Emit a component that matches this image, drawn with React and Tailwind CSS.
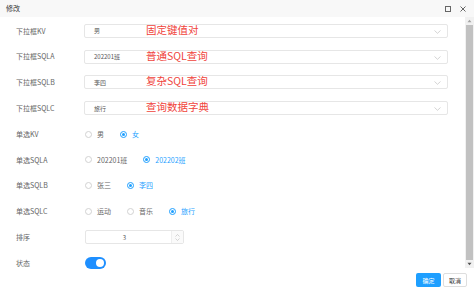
import React from "react";

const FONT = { fontFamily: '"Noto Sans CJK SC", "Noto Sans", sans-serif' };

function Chevron() {
  return (
    <svg width="7" height="4" viewBox="0 0 7 4" className="absolute right-[6px] top-[5px]">
      <path d="M0.5 0.5 L3.5 3.3 L6.5 0.5" fill="none" stroke="#c2c2c2" strokeWidth="0.7" />
    </svg>
  );
}

function Row({ label, children }) {
  return (
    <div className="flex h-[25.8px] items-center">
      <div className="w-[84px] shrink-0 pl-[16px] text-[7px] text-[#666]">{label}</div>
      {children}
    </div>
  );
}

function Select({ value, note }) {
  return (
    <div className="relative flex h-[14px] w-[364px] items-center rounded-[2px] border border-[#e6e6e6] bg-white pl-[9px] text-[6px] text-[#555]">
      <span>{value}</span>
      <span className="absolute left-[61px] top-[-2px] whitespace-nowrap text-[10.5px] leading-[14px] text-[#f0433b]">
        {note}
      </span>
      <Chevron />
    </div>
  );
}

function Radio({ label, checked }) {
  return (
    <div className="mr-[16px] flex items-center">
      {checked ? (
        <span className="flex h-[7px] w-[7px] items-center justify-center rounded-full border border-[#1e9fff] bg-white">
          <span className="h-[3px] w-[3px] rounded-full bg-[#1e9fff]" />
        </span>
      ) : (
        <span className="h-[7px] w-[7px] rounded-full border border-[#d2d2d2] bg-white" />
      )}
      <span className={`ml-[5px] text-[7px] ${checked ? "text-[#1e9fff]" : "text-[#666]"}`}>{label}</span>
    </div>
  );
}

export default function App() {
  return (
    <div className="flex h-[296px] w-[474px] flex-col overflow-hidden bg-white" style={FONT}>
      <div className="flex h-[17px] shrink-0 items-center justify-between bg-[#f8f8f8] pl-[6px] pr-[8px]">
        <span className="text-[7px] text-[#333]">修改</span>
        <div className="flex items-center gap-[9px]">
          <span className="h-[6px] w-[6px] border border-[#666]" />
          <svg width="6" height="6" viewBox="0 0 6 6">
            <path d="M0.5 0.5 L5.5 5.5 M5.5 0.5 L0.5 5.5" stroke="#555" strokeWidth="0.9" />
          </svg>
        </div>
      </div>
      <div className="flex h-[251px] shrink-0">
        <div className="flex-1 pt-[1px]">
          <Row label="下拉框KV"><Select value="男" note="固定键值对" /></Row>
          <Row label="下拉框SQLA"><Select value="202201班" note="普通SQL查询" /></Row>
          <Row label="下拉框SQLB"><Select value="李四" note="复杂SQL查询" /></Row>
          <Row label="下拉框SQLC"><Select value="旅行" note="查询数据字典" /></Row>
          <Row label="单选KV">
            <div className="flex pl-[1px]"><Radio label="男" /><Radio label="女" checked /></div>
          </Row>
          <Row label="单选SQLA">
            <div className="flex pl-[1px]"><Radio label="202201班" /><Radio label="202202班" checked /></div>
          </Row>
          <Row label="单选SQLB">
            <div className="flex pl-[1px]"><Radio label="张三" /><Radio label="李四" checked /></div>
          </Row>
          <Row label="单选SQLC">
            <div className="flex pl-[1px]"><Radio label="运动" /><Radio label="音乐" /><Radio label="旅行" checked /></div>
          </Row>
          <Row label="排序">
            <div className="ml-[1px] flex h-[14px] w-[99px] rounded-[2px] border border-[#e6e6e6] bg-white">
              <div className="flex flex-1 items-center justify-center pr-[8px] text-[6px] text-[#555]">3</div>
              <div className="flex w-[12px] flex-col items-center justify-center gap-[1px] border-l border-[#eee] bg-[#fafafa]">
                <svg width="5" height="3" viewBox="0 0 5 3"><path d="M0.5 2.5 L2.5 0.5 L4.5 2.5" fill="none" stroke="#bbb" strokeWidth="0.6" /></svg>
                <svg width="5" height="3" viewBox="0 0 5 3"><path d="M0.5 0.5 L2.5 2.5 L4.5 0.5" fill="none" stroke="#bbb" strokeWidth="0.6" /></svg>
              </div>
            </div>
          </Row>
          <Row label="状态">
            <div className="ml-[1px] flex h-[12px] w-[21px] items-center justify-end rounded-full bg-[#1e8fff] pr-[2px]">
              <span className="h-[8px] w-[8px] rounded-full bg-white" />
            </div>
          </Row>
        </div>
        <div className="flex w-[9px] flex-col items-center bg-[#f1f1f1] pt-[2px]">
          <svg width="5" height="4" viewBox="0 0 5 4" className="mb-[2px]"><path d="M2.5 0.8 L4.5 3.2 L0.5 3.2 Z" fill="#a3a3a3" /></svg>
          <div className="w-[7px] flex-1 bg-[#c1c1c1]" />
          <svg width="5" height="4" viewBox="0 0 5 4" className="my-[2px]"><path d="M0.5 0.8 L4.5 0.8 L2.5 3.2 Z" fill="#505050" /></svg>
        </div>
      </div>
      <div className="flex justify-end gap-[2px] pr-[7px] pt-[5px]">
        <button className="flex h-[14px] w-[25px] items-center justify-center rounded-[2px] bg-[#1e9fff] text-[6px] text-white">确定</button>
        <button className="flex h-[14px] w-[24px] items-center justify-center rounded-[2px] border border-[#dedede] bg-white text-[6px] text-[#333]">取消</button>
      </div>
    </div>
  );
}
